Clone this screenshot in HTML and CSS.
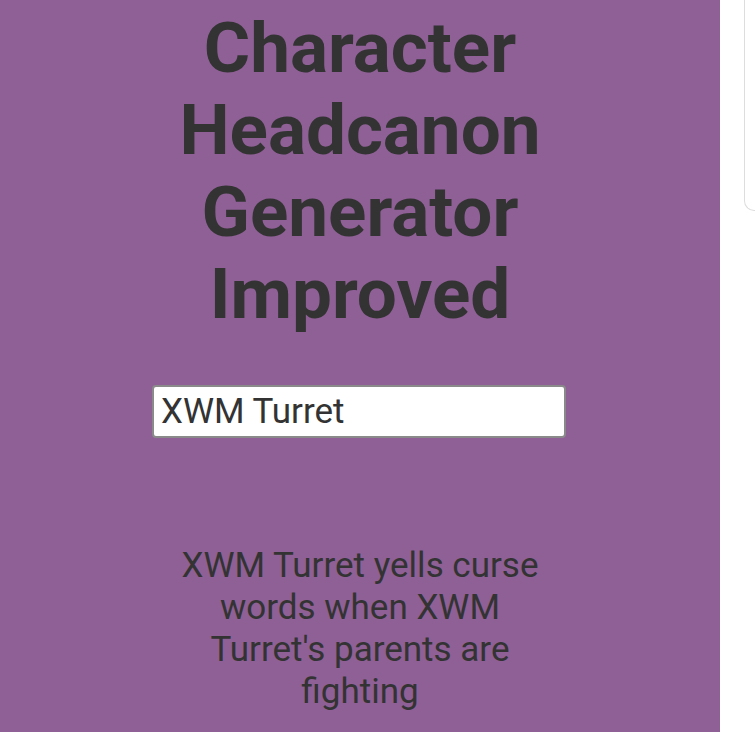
FILE: index.html
```html
<!DOCTYPE html>
<html>
<head>
<meta charset="utf-8">
<link rel="stylesheet" href="styles.css">
</head>
<body>
<div class="page">
  <main class="panel">
    <h1 class="title">Character Headcanon Generator Improved</h1>
    <input class="name-input" type="text" value="XWM Turret">
    <p class="result">XWM Turret yells curse words when XWM Turret's parents are fighting</p>
  </main>
  <aside class="side">
    <div class="side-box"></div>
  </aside>
</div>
</body>
</html>
```
FILE: styles.css
```css
html, body {
  margin: 0;
  padding: 0;
  height: 100%;
  background: #ffffff;
  overflow: hidden;
}
.page {
  display: flex;
  height: 732px;
}
.panel {
  width: 720px;
  flex: none;
  background: #8f6096;
  display: flex;
  flex-direction: column;
  align-items: center;
  font-family: Roboto, "Noto Sans", sans-serif;
  color: #333333;
}
.title {
  margin: 7px 0 0;
  width: 440px;
  text-align: center;
  font-size: 71px;
  line-height: 82px;
  font-weight: 700;
}
.name-input {
  margin-top: 50px;
  margin-right: 2px;
  box-sizing: border-box;
  width: 414px;
  height: 53px;
  padding: 0 7px;
  border: 2px solid #8a8a8a;
  border-radius: 4px;
  background: #ffffff;
  font-family: Roboto, "Noto Sans", sans-serif;
  font-size: 35px;
  color: #333333;
  outline: none;
}
.result {
  margin: 107px 0 0;
  width: 366px;
  text-align: center;
  font-size: 35px;
  line-height: 42px;
}
.side {
  flex: 1;
  padding-left: 24px;
}
.side-box {
  height: 210px;
  border-left: 1px solid #dddddd;
  border-bottom: 1px solid #dddddd;
  border-bottom-left-radius: 10px;
}
```
